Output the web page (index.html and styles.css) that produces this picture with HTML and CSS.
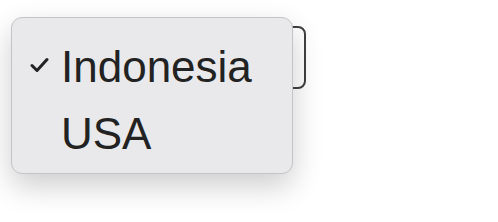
FILE: index.html
```html
<!DOCTYPE html>
<html lang="en">
  <head>
    <meta charset="UTF-8" />
    <meta name="viewport" content="width=device-width, initial-scale=1.0" />
    <title>Country Select</title>
    <link rel="stylesheet" href="styles.css">
  </head>
  <body>
    <div class="picker">
      <!-- the closed select sitting behind the open menu -->
      <div class="select-box"></div>
      <ul class="menu">
        <li class="option selected">
          <svg class="check" width="19" height="16" viewBox="0 0 19 16">
            <path d="M2 8.5 L7 13.5 L17 2.5" fill="none" stroke="#222" stroke-width="3" stroke-linecap="round" stroke-linejoin="round" />
          </svg>
          <span>Indonesia</span>
        </li>
        <li class="option">
          <span>USA</span>
        </li>
      </ul>
    </div>
  </body>
</html>
```

FILE: styles.css
```css
* {
  margin: 0;
  padding: 0;
  box-sizing: border-box;
}

body {
  background-color: #ffffff;
  font-family: 'Liberation Sans', Arial, sans-serif;
  overflow: hidden;
}

.picker {
  position: relative;
  width: 498px;
  height: 222px;
  padding: 26px 0 0 40px;
}

.select-box {
  width: 266px;
  height: 63px;
  border: 2px solid #404040;
  border-radius: 8px;
}

.menu {
  position: absolute;
  top: 17px;
  left: 11px;
  width: 282px;
  height: 157px;
  list-style: none;
  padding-top: 15px;
  background-color: #e9e9eb;
  border: 1px solid #c4c4c6;
  border-radius: 11px;
  box-shadow: 0 12px 30px rgba(0, 0, 0, 0.2);
}

.option {
  display: flex;
  align-items: center;
  height: 67px;
  padding-left: 49px;
  font-size: 44px;
  line-height: 67px;
  color: #222222;
  position: relative;
}

.check {
  position: absolute;
  left: 18px;
  top: 24px;
}
```
